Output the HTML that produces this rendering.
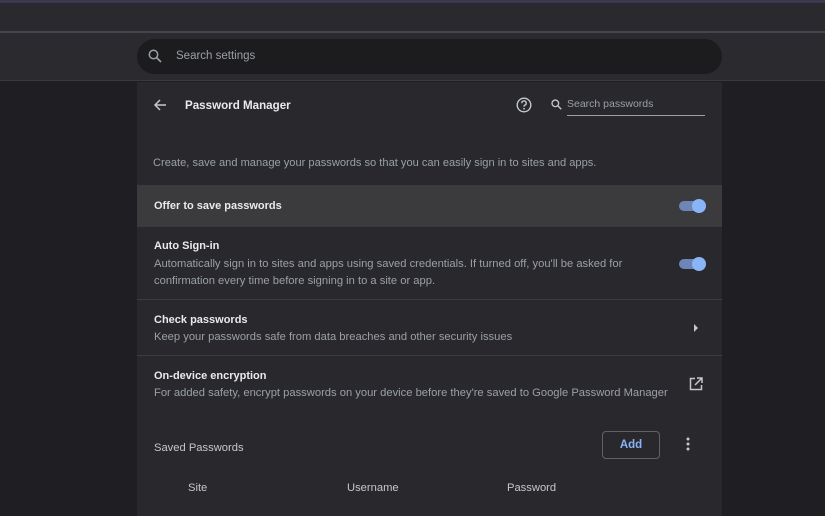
<!DOCTYPE html>
<html><head><style>
*{margin:0;padding:0;box-sizing:border-box}
body{width:825px;height:516px;overflow:hidden;background:#1f1f23;font-family:"Liberation Sans",sans-serif;position:relative;color:#e8eaed}
.abs{position:absolute}
.t{font-size:11px;font-weight:bold;color:#e8eaed}
.s{font-size:11.2px;color:#9aa0a6}
.tog{position:absolute;width:26px;height:10px;border-radius:5px;background:#6e85b8}
.tog::after{content:"";position:absolute;right:-1px;top:-2.5px;width:14px;height:14px;border-radius:50%;background:#8ab4f8}
.sep{position:absolute;left:137px;width:585px;height:1px;background:#3c3d40}
</style></head><body>
<div class="abs" style="left:0;top:0;width:825px;height:3px;background:#3a3950"></div>
<div class="abs" style="left:0;top:3px;width:825px;height:28px;background:#29292e"></div>
<div class="abs" style="left:0;top:31px;width:825px;height:2px;background:#45454f"></div>
<div class="abs" style="left:0;top:33px;width:825px;height:48px;background:#2a2a2f;border-bottom:1px solid #3a3a40"></div>
<div class="abs" style="left:137px;top:39px;width:585px;height:35px;border-radius:18px;background:#1c1c1f"></div>
<svg class="abs" style="left:148px;top:49px" width="14" height="14" viewBox="0 0 14 14"><circle cx="5.5" cy="5.5" r="4.2" fill="none" stroke="#9aa0a6" stroke-width="1.5"/><path d="M8.5 8.5L13 13" stroke="#9aa0a6" stroke-width="1.6"/></svg>
<div class="abs" style="left:176px;top:50px;font-size:11.5px;color:#9aa0a6">Search settings</div>
<div class="abs" style="left:137px;top:82px;width:585px;height:434px;background:#29292d"></div>
<svg class="abs" style="left:153px;top:98px" width="14" height="14" viewBox="0 0 14 14"><path d="M13 7H2M7 2L2 7l5 5" fill="none" stroke="#c4c7cc" stroke-width="1.5"/></svg>
<div class="abs" style="left:185px;top:99px;font-size:11.6px;font-weight:bold;color:#e8eaed">Password Manager</div>
<svg class="abs" style="left:516px;top:97px" width="16" height="16" viewBox="0 0 16 16"><circle cx="8" cy="8" r="6.8" fill="none" stroke="#c4c7cc" stroke-width="1.4"/><path d="M5.8 6.2a2.2 2.2 0 1 1 3 2c-.7.3-.8.8-.8 1.5" fill="none" stroke="#c4c7cc" stroke-width="1.4"/><circle cx="8" cy="11.8" r=".9" fill="#c4c7cc"/></svg>
<svg class="abs" style="left:551px;top:99px" width="11" height="11" viewBox="0 0 14 14"><circle cx="5.5" cy="5.5" r="4.2" fill="none" stroke="#c4c7cc" stroke-width="1.7"/><path d="M8.5 8.5L13 13" stroke="#c4c7cc" stroke-width="1.8"/></svg>
<div class="abs" style="left:567px;top:98px;font-size:10.5px;color:#9aa0a6">Search passwords</div>
<div class="abs" style="left:567px;top:115px;width:138px;height:1px;background:#9aa0a6"></div>
<div class="abs s" style="left:153px;top:157px;font-size:11.1px">Create, save and manage your passwords so that you can easily sign in to sites and apps.</div>
<div class="abs" style="left:137px;top:185px;width:585px;height:42px;background:#3b3b3e"></div>
<div class="abs t" style="left:154px;top:200px">Offer to save passwords</div>
<div class="tog" style="left:679px;top:201px"></div>
<div class="abs t" style="left:154px;top:240px">Auto Sign-in</div>
<div class="abs s" style="left:154px;top:256px;line-height:17px">Automatically sign in to sites and apps using saved credentials. If turned off, you'll be asked for<br>confirmation every time before signing in to a site or app.</div>
<div class="tog" style="left:679px;top:259px"></div>
<div class="sep" style="top:299px"></div>
<div class="abs t" style="left:154px;top:314px">Check passwords</div>
<div class="abs s" style="left:154px;top:331px">Keep your passwords safe from data breaches and other security issues</div>
<svg class="abs" style="left:693px;top:324px" width="6" height="8" viewBox="0 0 6 8"><path d="M1 0l4 4-4 4z" fill="#c4c7cc"/></svg>
<div class="sep" style="top:355px"></div>
<div class="abs t" style="left:154px;top:370px">On-device encryption</div>
<div class="abs s" style="left:154px;top:387px">For added safety, encrypt passwords on your device before they're saved to Google Password Manager</div>
<svg class="abs" style="left:689px;top:377px" width="14" height="14" viewBox="0 0 14 14"><path d="M6 1.5H1.5v11h11V8" fill="none" stroke="#c4c7cc" stroke-width="1.5"/><path d="M8 1h5v5M13 1L6 8" fill="none" stroke="#c4c7cc" stroke-width="1.5"/></svg>
<div class="abs" style="left:154px;top:442px;font-size:11.2px;color:#c4c7cc">Saved Passwords</div>
<div class="abs" style="left:602px;top:431px;width:58px;height:28px;border:1px solid #5f6368;border-radius:4px;color:#8ab4f8;font-size:11.5px;font-weight:bold;text-align:center;line-height:26px">Add</div>
<svg class="abs" style="left:686px;top:437px" width="4" height="14" viewBox="0 0 4 14"><circle cx="2" cy="2" r="1.5" fill="#c4c7cc"/><circle cx="2" cy="7" r="1.5" fill="#c4c7cc"/><circle cx="2" cy="12" r="1.5" fill="#c4c7cc"/></svg>
<div class="abs" style="left:188px;top:482px;color:#c4c7cc;font-size:11.2px">Site</div>
<div class="abs" style="left:347px;top:482px;color:#c4c7cc;font-size:11.2px">Username</div>
<div class="abs" style="left:507px;top:482px;color:#c4c7cc;font-size:11.2px">Password</div>
</body></html>
